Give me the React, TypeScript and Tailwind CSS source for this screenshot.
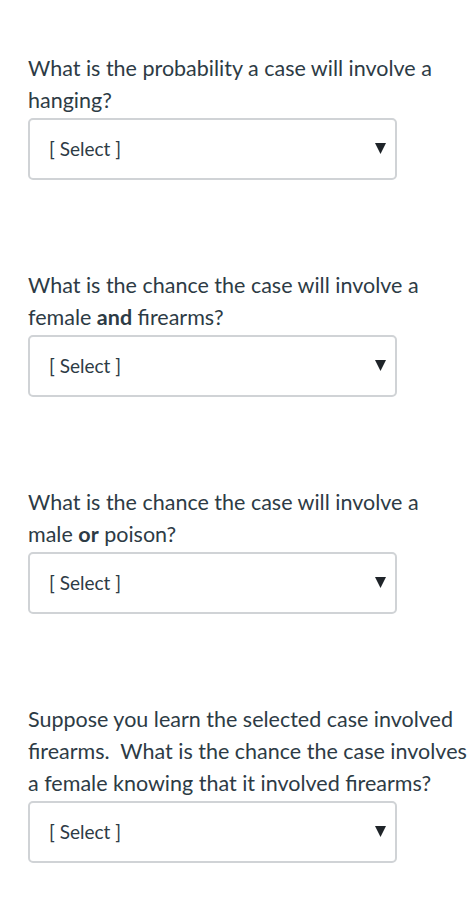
const QUESTIONS: React.ReactNode[] = [
  <>What is the probability a case will involve a hanging?</>,
  <>
    What is the chance the case will involve a female <b className="font-bold">and</b> firearms?
  </>,
  <>
    What is the chance the case will involve a male <b className="font-bold">or</b> poison?
  </>,
  <>Suppose you learn the selected case involved firearms.{'\u00a0 '}What is the chance the case involves a female knowing that it involved firearms?</>,
];

function SelectBox() {
  return (
    <div className="flex h-[62px] w-[369px] items-center justify-between rounded-[5px] border-2 border-[#d0d3d6] bg-white pl-[19px] pr-[9px]">
      <span className="text-[19px] text-[#2d3b45]">[ Select ]</span>
      <svg width="11" height="11" viewBox="0 0 11 11" className="mb-[1px]">
        <path d="M0 0H11L5.5 11Z" fill="#1f2429" />
      </svg>
    </div>
  );
}

export default function App() {
  return (
    <div className="min-h-[905px] bg-white pt-[52px] pl-[28px] font-['Lato','Open_Sans',sans-serif] text-[#2d3b45]">
      <div className="flex flex-col gap-[89px]">
        {QUESTIONS.map((q, i) => (
          <div key={i} className="flex flex-col gap-[2px]">
            <p className="w-[439px] text-[21.5px] leading-[32px]">{q}</p>
            <SelectBox />
          </div>
        ))}
      </div>
    </div>
  );
}
